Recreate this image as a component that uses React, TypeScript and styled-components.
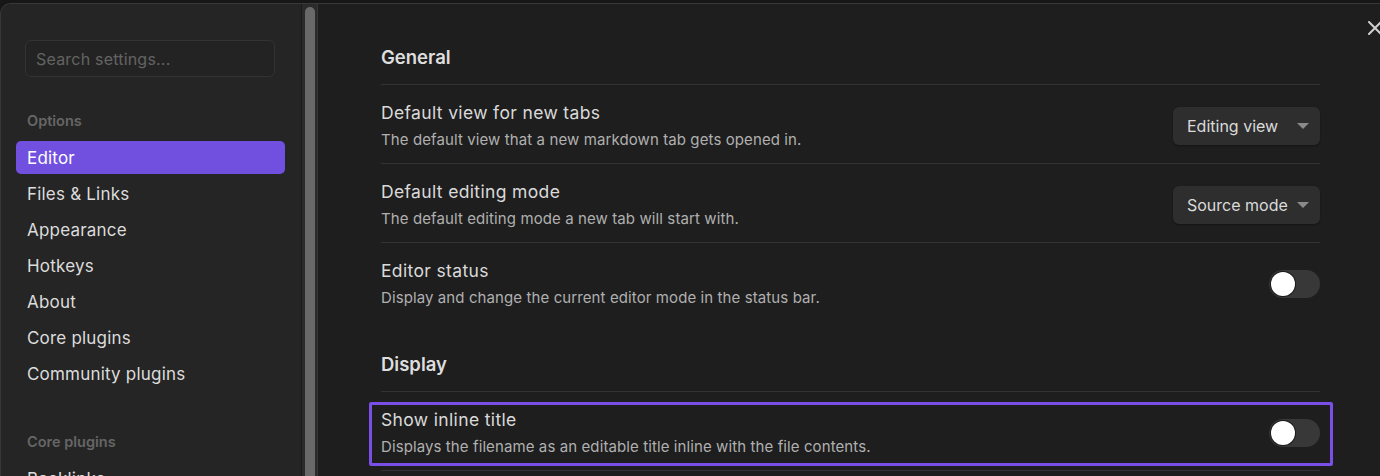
import React from "react";
import styled, { createGlobalStyle } from "styled-components";

const Global = createGlobalStyle`
  html, body { margin: 0; padding: 0; background: #171717; }
  body { font-family: Inter, "Noto Sans", "Liberation Sans", sans-serif; -webkit-font-smoothing: antialiased; }
  * { box-sizing: border-box; }
`;

const Page = styled.div`
  width: 1380px;
  height: 476px;
  overflow: hidden;
  padding-top: 3px;
  background: #171717;
`;

const Modal = styled.div`
  position: relative;
  display: flex;
  height: 520px;
  border-top: 1px solid #383838;
  border-left: 1px solid #383838;
  border-top-left-radius: 11px;
  overflow: hidden;
  background: #1e1e1e;
`;

const Sidebar = styled.nav`
  width: 300px;
  flex: none;
  background: #252525;
  padding: 36px 16px 0 15px;
  display: flex;
  flex-direction: column;
`;

const Search = styled.input`
  margin: 0 10px 0 9px;
  height: 37px;
  border: 1px solid #333;
  border-radius: 6px;
  background: #232323;
  padding: 0 10px;
  font: inherit;
  font-size: 16px;
  letter-spacing: 0.2px;
  color: #ddd;
  outline: none;
  &::placeholder { color: #636363; }
`;

const GroupLabel = styled.div<{ $top: number }>`
  margin-top: ${(p) => p.$top}px;
  margin-bottom: 10px;
  padding-left: 11px;
  font-size: 14.5px;
  font-weight: 600;
  line-height: 20px;
  color: #666;
`;

const NavItem = styled.div<{ $active?: boolean }>`
  height: 33px;
  margin-bottom: 3px;
  padding-left: 11px;
  display: flex;
  align-items: center;
  border-radius: 5px;
  font-size: 17px;
  letter-spacing: 0.2px;
  color: ${(p) => (p.$active ? "#fff" : "#dcdcdc")};
  background: ${(p) => (p.$active ? "#7150e0" : "transparent")};
`;

const ScrollTrack = styled.div`
  width: 17px;
  flex: none;
  background: #2b2b2b;
  border-left: 1px solid #1b1b1b;
  border-right: 1px solid #363636;
  padding: 3px 2px 0 3px;
`;

const ScrollThumb = styled.div`
  width: 10px;
  height: 600px;
  border-radius: 5px;
  background: #696969;
`;

const Content = styled.main`
  flex: 1;
  padding: 41px 60px 0 63px;
`;

const Heading = styled.div<{ $first?: boolean }>`
  margin-top: ${(p) => (p.$first ? 0 : 30)}px;
  padding-bottom: 15px;
  border-bottom: 1px solid #333;
  font-size: 18.5px;
  font-weight: 600;
  line-height: 24px;
  color: #dedede;
`;

const Row = styled.div<{ $last?: boolean; $highlight?: boolean }>`
  position: relative;
  display: flex;
  align-items: center;
  justify-content: space-between;
  padding: 17px 0 13px;
  border-bottom: 1px solid ${(p) => (p.$last ? "transparent" : "#333")};
  ${(p) =>
    p.$highlight &&
    `&::after {
      content: "";
      position: absolute;
      left: -12px;
      right: -13px;
      top: 10px;
      bottom: 4px;
      border: 3px solid #7a4fe8;
      border-radius: 2px;
      pointer-events: none;
    }`}
`;

const Info = styled.div`
  display: flex;
  flex-direction: column;
`;

const Title = styled.div`
  font-size: 17.5px;
  letter-spacing: 0.35px;
  line-height: 22px;
  color: #dadada;
`;

const Desc = styled.div`
  margin-top: 6px;
  font-size: 15px;
  letter-spacing: 0.1px;
  line-height: 20px;
  color: #b0b0b0;
`;

const Dropdown = styled.div`
  width: 147px;
  height: 38px;
  display: flex;
  align-items: center;
  justify-content: space-between;
  padding: 0 11px 0 14px;
  border-radius: 6px;
  background: #2e2e2e;
  box-shadow: 0 1px 2px rgba(0, 0, 0, 0.35);
  font-size: 16px;
  color: #dadada;
`;

const Caret = styled.span`
  width: 0;
  height: 0;
  border-left: 6px solid transparent;
  border-right: 6px solid transparent;
  border-top: 6px solid #8a8a8a;
`;

const Toggle = styled.div`
  width: 51px;
  height: 28px;
  border-radius: 14px;
  background: #383838;
  padding: 2px;
  display: flex;
  align-items: center;
`;

const Knob = styled.div`
  width: 24px;
  height: 24px;
  border-radius: 50%;
  background: #fff;
  box-shadow: 0 0 0 1px #1a1a1a;
`;

const Close = styled.div`
  position: absolute;
  top: 16px;
  right: -3px;
  width: 16px;
  height: 16px;
  color: #cfcfcf;
`;

const navItems = ["Editor", "Files & Links", "Appearance", "Hotkeys", "About", "Core plugins", "Community plugins"];

type Setting = { title: string; desc: string; control: "select" | "toggle"; value?: string };

const general: Setting[] = [
  { title: "Default view for new tabs", desc: "The default view that a new markdown tab gets opened in.", control: "select", value: "Editing view" },
  { title: "Default editing mode", desc: "The default editing mode a new tab will start with.", control: "select", value: "Source mode" },
  { title: "Editor status", desc: "Display and change the current editor mode in the status bar.", control: "toggle" },
];

function Control({ s }: { s: Setting }) {
  if (s.control === "select")
    return (
      <Dropdown>
        <span>{s.value}</span>
        <Caret />
      </Dropdown>
    );
  return (
    <Toggle>
      <Knob />
    </Toggle>
  );
}

export default function App() {
  return (
    <>
      <Global />
      <Page>
        <Modal>
          <Sidebar>
            <Search placeholder="Search settings..." />
            <GroupLabel $top={34}>Options</GroupLabel>
            {navItems.map((n) => (
              <NavItem key={n} $active={n === "Editor"}>
                {n}
              </NavItem>
            ))}
            <GroupLabel $top={39}>Core plugins</GroupLabel>
            <NavItem>Backlinks</NavItem>
          </Sidebar>
          <ScrollTrack>
            <ScrollThumb />
          </ScrollTrack>
          <Content>
            <Heading $first>General</Heading>
            {general.map((s, i) => (
              <Row key={s.title} $last={i === general.length - 1}>
                <Info>
                  <Title>{s.title}</Title>
                  <Desc>{s.desc}</Desc>
                </Info>
                <Control s={s} />
              </Row>
            ))}
            <Heading>Display</Heading>
            <Row $highlight>
              <Info>
                <Title>Show inline title</Title>
                <Desc>Displays the filename as an editable title inline with the file contents.</Desc>
              </Info>
              <Control s={{ title: "", desc: "", control: "toggle" }} />
            </Row>
          </Content>
          <Close>
            <svg width="16" height="16" viewBox="0 0 16 16" fill="none" stroke="currentColor" strokeWidth="2" strokeLinecap="round">
              <path d="M2 2 L14 14 M14 2 L2 14" />
            </svg>
          </Close>
        </Modal>
      </Page>
    </>
  );
}
